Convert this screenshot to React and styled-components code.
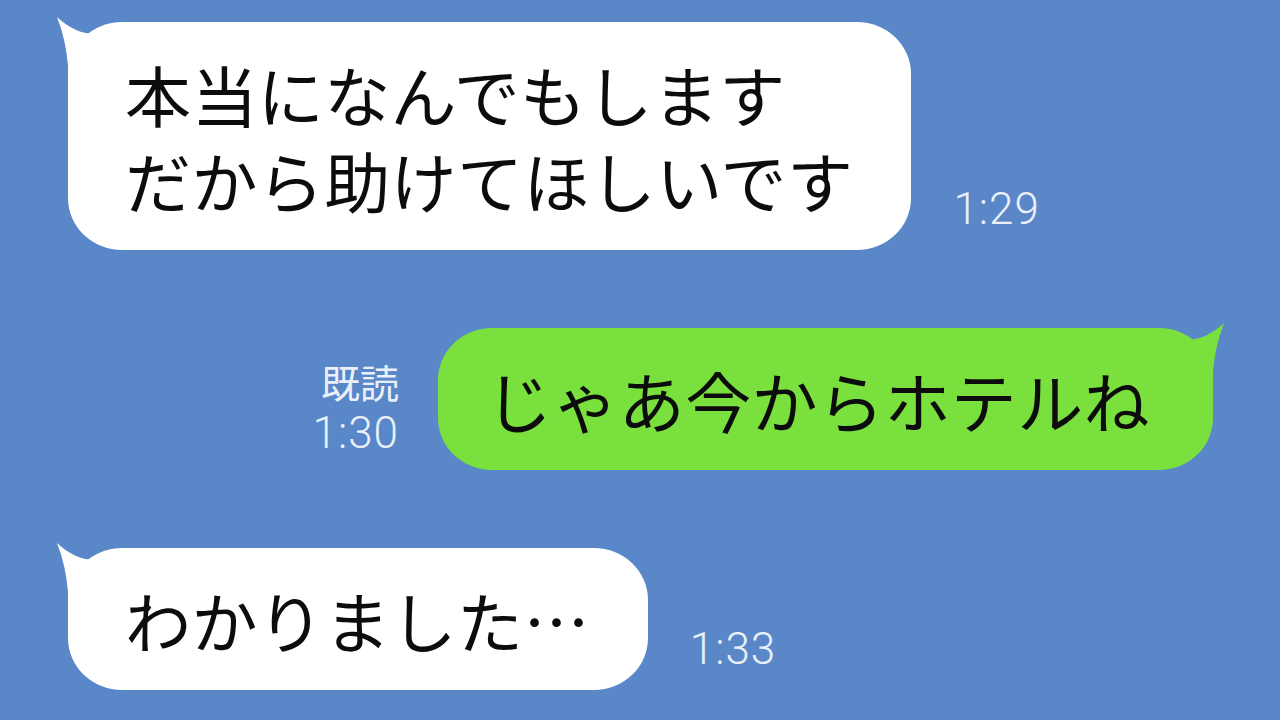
import React from "react";
import styled, { createGlobalStyle } from "styled-components";

const BLUE = "#5a87c7";
const GREEN = "#79e03d";

const Global = createGlobalStyle`
  html, body { margin: 0; padding: 0; background: ${BLUE}; }
  #root { width: 1280px; height: 720px; overflow: hidden; }
`;

const Screen = styled.main`
  width: 1280px;
  height: 720px;
  box-sizing: border-box;
  background: ${BLUE};
  padding: 22px 67px 0 68px;
  display: flex;
  flex-direction: column;
  gap: 78px;
  font-family: "Noto Sans CJK JP", "Noto Sans", sans-serif;
`;

const Row = styled.div`
  display: flex;
  align-items: flex-end;
  justify-content: ${(p) => (p.$mine ? "flex-end" : "flex-start")};
  gap: ${(p) => (p.$mine ? "39px" : "42px")};
`;

const Bubble = styled.div`
  position: relative;
  background: ${(p) => (p.$mine ? GREEN : "#ffffff")};
  color: #0c0c0c;
  font-size: 66px;
  letter-spacing: 0.4px;
  line-height: 86px;
  padding: ${(p) => (p.$mine ? "28px 63px 28px 48px" : "28px 58px 28px 57px")};
  border-radius: 54px / 52px;
  white-space: nowrap;
`;

const Line = styled.div``;

const TailSvg = styled.svg`
  position: absolute;
  top: -6px;
  width: 60px;
  height: 66px;
  ${(p) => (p.$mine ? "right: -12px;" : "left: -12px;")}
  fill: ${(p) => (p.$mine ? GREEN : "#ffffff")};
`;

const Tail = ({ mine }) => (
  <TailSvg $mine={mine} viewBox="0 0 60 66" aria-hidden="true">
    {mine ? (
      <path d="M59 1 Q40 19 18 18 L18 66 L48 66 L48 50 Q50 24 59 1 Z" />
    ) : (
      <path d="M1 1 Q20 19 42 18 L42 66 L12 66 L12 50 Q10 24 1 1 Z" />
    )}
  </TailSvg>
);

const Time = styled.span`
  font-family: Roboto, "Noto Sans", sans-serif;
  font-weight: 300;
  font-size: 44px;
  line-height: 40px;
  color: #e9f0fa;
  margin-bottom: 21px;
  letter-spacing: 1px;
`;

const Meta = styled.div`
  display: flex;
  flex-direction: column;
  align-items: flex-end;
  gap: 12px;
  margin-bottom: 17px;
`;

const ReadLabel = styled.span`
  font-family: "Noto Sans CJK JP", sans-serif;
  font-size: 39px;
  line-height: 40px;
  color: #e9f0fa;
`;

const MetaTime = styled(Time)`
  margin-bottom: 0;
`;

export default function App() {
  return (
    <>
      <Global />
      <Screen>
        <Row>
          <Bubble>
            <Tail />
            <Line>本当になんでもします</Line>
            <Line>だから助けてほしいです</Line>
          </Bubble>
          <Time>1:29</Time>
        </Row>
        <Row $mine>
          <Meta>
            <ReadLabel>既読</ReadLabel>
            <MetaTime>1:30</MetaTime>
          </Meta>
          <Bubble $mine>
            <Tail mine />
            <Line>じゃあ今からホテルね</Line>
          </Bubble>
        </Row>
        <Row>
          <Bubble>
            <Tail />
            <Line>わかりました…</Line>
          </Bubble>
          <Time>1:33</Time>
        </Row>
      </Screen>
    </>
  );
}
